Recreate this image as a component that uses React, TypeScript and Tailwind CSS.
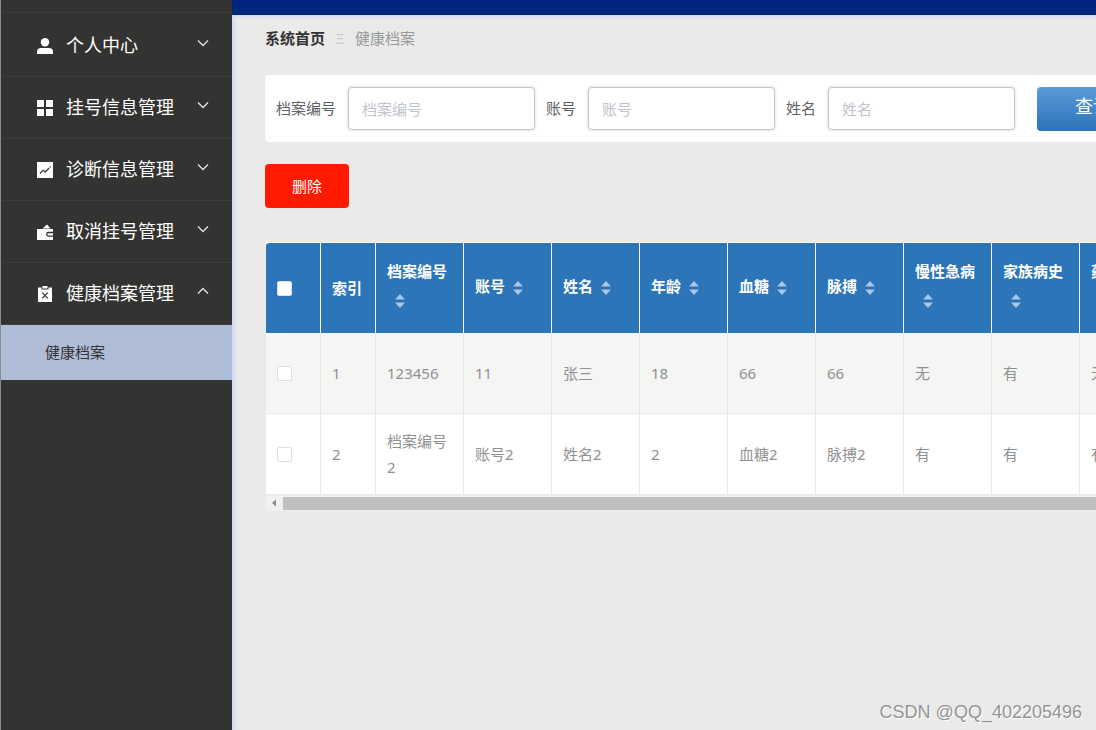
import { useState } from "react";
import type { ReactNode } from "react";

type MenuItem = {
  label: string;
  icon: ReactNode;
  children?: string[];
};

type Column = {
  key: string;
  label: string;
};

const iconClass = "h-4 w-4 shrink-0";

const menu: MenuItem[] = [
  {
    label: "个人中心",
    icon: (
      <svg viewBox="0 0 16 16" fill="currentColor" className={iconClass}>
        <circle cx="8" cy="4.2" r="4.2" />
        <path d="M0 16V14Q0 10 4 10H12Q16 10 16 14V16Z" />
      </svg>
    ),
  },
  {
    label: "挂号信息管理",
    icon: (
      <svg viewBox="0 0 16 16" fill="currentColor" className={iconClass}>
        <path d="M0 0h7v7H0zM9 0h7v7H9zM0 9h7v7H0zM9 9h7v7H9z" />
      </svg>
    ),
  },
  {
    label: "诊断信息管理",
    icon: (
      <svg viewBox="0 0 16 16" className={iconClass}>
        <path d="M0 0h16v16H0z" fill="currentColor" />
        <path
          d="M3 11.5L6 8.2L8.5 10L12 6M12.8 4.8H14"
          fill="none"
          stroke="#333331"
          strokeWidth="1.2"
        />
      </svg>
    ),
  },
  {
    label: "取消挂号管理",
    icon: (
      <svg viewBox="0 0 16 16" className={iconClass}>
        <path d="M0 5H16V16H0Z" fill="currentColor" />
        <path d="M5.500 4.500L10 0.500L13.500 4.500Z" fill="currentColor" />
        <path
          d="M16 8.500H11.500A1.800 1.800 0 0 0 11.500 12.100H16"
          fill="none"
          stroke="#333331"
          strokeWidth="1.3"
        />
      </svg>
    ),
  },
  {
    label: "健康档案管理",
    icon: (
      <svg viewBox="0 0 16 16" className={iconClass}>
        <path d="M1 1.5H4.5V3.5H11.5V1.5H15V16H1Z" fill="currentColor" />
        <path d="M5.5 0H10.5V2.5H5.5Z" fill="currentColor" />
        <path
          d="M5.2 6.700L10.800 12.300M10.800 6.700L5.200 12.300"
          stroke="#333331"
          strokeWidth="1.2"
        />
      </svg>
    ),
    children: ["健康档案"],
  },
];

const filters = ["档案编号", "账号", "姓名"];

const columns: Column[] = [
  { key: "code", label: "档案编号" },
  { key: "account", label: "账号" },
  { key: "name", label: "姓名" },
  { key: "age", label: "年龄" },
  { key: "sugar", label: "血糖" },
  { key: "pulse", label: "脉搏" },
  { key: "chronic", label: "慢性急病" },
  { key: "family", label: "家族病史" },
  { key: "allergy", label: "药物过敏" },
];

const records: Record<string, string>[] = [
  {
    code: "123456",
    account: "11",
    name: "张三",
    age: "18",
    sugar: "66",
    pulse: "66",
    chronic: "无",
    family: "有",
    allergy: "无",
  },
  {
    code: "档案编号2",
    account: "账号2",
    name: "姓名2",
    age: "2",
    sugar: "血糖2",
    pulse: "脉搏2",
    chronic: "有",
    family: "有",
    allergy: "有",
  },
];

function Chevron({ open }: { open: boolean }) {
  return (
    <svg
      viewBox="0 0 12 8"
      className="mb-1.5 h-2 w-3"
      fill="none"
      stroke="#e4e4e4"
      strokeWidth="1.3"
    >
      <path d={open ? "M1 6.5L6 1.5L11 6.5" : "M1 1.5L6 6.5L11 1.5"} />
    </svg>
  );
}

function SortButton({ label }: { label: string }) {
  return (
    <button
      type="button"
      aria-label={`${label}排序`}
      className="inline-flex h-[34px] w-[26px] items-center justify-center align-middle"
    >
      <svg viewBox="0 0 12 16" className="h-4 w-3" fill="#afc5df">
        <path d="M6 1L11 6.5H1ZM6 15L11 9.5H1Z" />
      </svg>
    </button>
  );
}

function Sidebar() {
  const [opened, setOpened] = useState("健康档案管理");

  return (
    <aside className="w-[232px] shrink-0 border-l border-[#8b8b8b] bg-[#333331] pt-3 text-white">
      <nav className="border-t border-[#3c3c3a] pt-0.5">
        {menu.map((item) => (
          <div key={item.label}>
            <button
              type="button"
              aria-expanded={opened === item.label}
              onClick={() => setOpened(opened === item.label ? "" : item.label)}
              className="flex h-[62px] w-full items-center border-b border-[#3c3c3a] pr-[23px] pl-9 text-[18px]"
            >
              {item.icon}
              <span className="ml-[13px] flex-1 text-left">{item.label}</span>
              <Chevron open={opened === item.label} />
            </button>

            {opened === item.label &&
              item.children?.map((child) => (
                <a
                  key={child}
                  href="#"
                  className="flex h-[55px] items-center bg-[#b0bdd6] pl-11 text-[15px] text-[#333]"
                >
                  {child}
                </a>
              ))}
          </div>
        ))}
      </nav>
    </aside>
  );
}

function SearchForm() {
  return (
    <form
      className="flex h-[67px] w-max min-w-full items-center gap-[11px] rounded bg-white px-[11px]"
      onSubmit={(e) => e.preventDefault()}
    >
      {filters.map((label) => (
        <label key={label} className="flex shrink-0 items-center gap-3 text-[#606266]">
          {label}
          <input
            type="text"
            placeholder={label}
            className="h-[43px] w-[187px] rounded border border-[#c8c8c8] bg-white px-[13px] shadow-[0_0_3px_rgba(0,0,0,0.2)] outline-none placeholder:text-[#c0c4cc]"
          />
        </label>
      ))}
      <button
        type="submit"
        className="ml-[11px] h-11 shrink-0 rounded bg-gradient-to-b from-[#5b9bd9] to-[#2a74b8] px-[38px] pb-1 text-[18px] text-white"
      >
        查询
      </button>
    </form>
  );
}

function RecordTable() {
  const [selected, setSelected] = useState<number[]>([]);

  const toggle = (index: number) => {
    setSelected(
      selected.includes(index)
        ? selected.filter((i) => i !== index)
        : [...selected, index]
    );
  };

  const checkboxClass =
    "block h-[15px] w-[15px] appearance-none rounded-xs border border-[#dcdfe6] bg-white checked:bg-[#409eff]";

  return (
    <div className="ml-px w-max">
      <table className="w-[902px] table-fixed border-separate border-spacing-0 overflow-hidden rounded-tl border-t border-white text-left leading-[26px]">
        <colgroup>
          <col className="w-[55px]" />
          <col className="w-[55px]" />
          {columns.map((column) => (
            <col key={column.key} className="w-[88px]" />
          ))}
        </colgroup>
        <thead>
          <tr className="h-[90px] bg-[#2b75b8] text-white">
            <th className="border-r border-white px-[11px]">
              <input
                type="checkbox"
                aria-label="全选"
                className={checkboxClass}
                checked={selected.length === records.length}
                onChange={(e) =>
                  setSelected(e.target.checked ? records.map((_, i) => i) : [])
                }
              />
            </th>
            <th className="border-r border-white px-[11px]">索引</th>
            {columns.map((column) => (
              <th key={column.key} className="border-r border-white px-[11px]">
                {column.label}
                <SortButton label={column.label} />
              </th>
            ))}
          </tr>
        </thead>
        <tbody className="text-[#8f9193]">
          {records.map((record, index) => (
            <tr key={record.code} className="h-[81px] odd:bg-[#f5f5f4] even:bg-white">
              <td className="border-r border-b border-[#e9e9e9] px-[11px]">
                <input
                  type="checkbox"
                  aria-label={`选择第${index + 1}行`}
                  className={checkboxClass}
                  checked={selected.includes(index)}
                  onChange={() => toggle(index)}
                />
              </td>
              <td className="border-r border-b border-[#e9e9e9] px-[11px]">{index + 1}</td>
              {columns.map((column) => (
                <td
                  key={column.key}
                  className="border-r border-b border-[#e9e9e9] px-[11px]"
                >
                  {record[column.key]}
                </td>
              ))}
            </tr>
          ))}
        </tbody>
      </table>

      {/* horizontal scroll track */}
      <div className="flex h-4 items-center bg-[#f1f1f0]">
        <svg viewBox="0 0 17 16" className="h-4 w-[17px]" fill="#8c8c8c">
          <path d="M10 4.5V11.5L6 8Z" />
        </svg>
        <div className="h-[13px] flex-1 bg-[#bfbfbe]" />
      </div>
    </div>
  );
}

export default function App() {
  return (
    <div className="relative flex min-h-screen overflow-hidden bg-[#eaeae9] font-['Noto_Sans','Noto_Sans_CJK_SC',sans-serif] text-[15px]">
      <Sidebar />

      <div className="flex min-w-0 flex-1 flex-col">
        <header className="h-[15px] bg-[#00277d]" />

        <main className="min-w-0 flex-1 overflow-hidden pl-[33px] shadow-[inset_3px_2px_3px_#d3dcf2]">
          <nav aria-label="breadcrumb" className="flex h-[46px] items-center">
            <a href="#" className="font-bold text-[#303133]">
              系统首页
            </a>
            <span className="w-[30px] text-center text-[#c8cacd]">Ξ</span>
            <span className="text-[#97999c]">健康档案</span>
          </nav>

          <div className="mt-3.5">
            <SearchForm />
          </div>

          <button
            type="button"
            className="mt-[22px] mb-[34px] block h-11 w-[84px] rounded bg-[#ff1a00] text-white"
          >
            删除
          </button>

          <RecordTable />
        </main>
      </div>

      <div className="absolute right-[14px] bottom-1 font-['Liberation_Sans',sans-serif] text-[18px] text-[#949494] [text-shadow:1px_1px_0_#fff]">
        CSDN @QQ_402205496
      </div>
    </div>
  );
}
